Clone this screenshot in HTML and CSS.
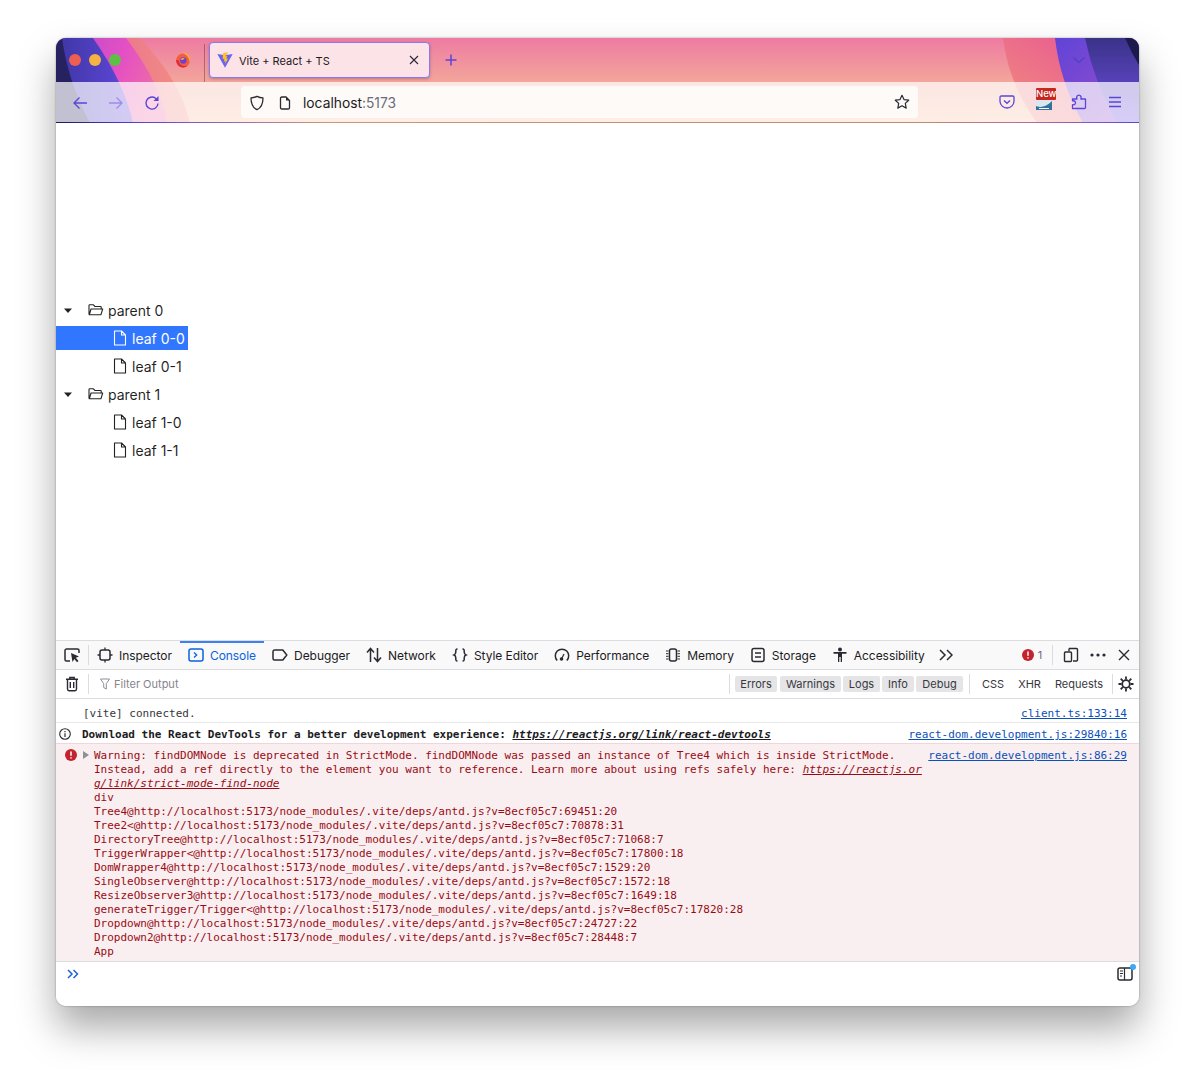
FILE: index.html
```html
<!DOCTYPE html>
<html lang="en">
<head>
<meta charset="utf-8">
<title>Vite + React + TS</title>
<link rel="stylesheet" href="styles.css">
</head>
<body>
<div class="window">
  <header class="chrome">
    <svg class="art" viewBox="0 0 1083 85" preserveAspectRatio="none" aria-hidden="true">
      <defs>
        <linearGradient id="base" x1="0" y1="0" x2="0" y2="1"><stop offset="0" stop-color="#ee7ba2"/><stop offset=".55" stop-color="#f3a89a"/><stop offset="1" stop-color="#f8c0a0"/></linearGradient>
        <linearGradient id="magL" x1="0" y1="0" x2="1" y2=".3"><stop offset="0" stop-color="#b04ccc"/><stop offset=".6" stop-color="#e44fc4"/><stop offset="1" stop-color="#ee6ca8"/></linearGradient>
        <linearGradient id="salL" x1="0" y1="0" x2="1" y2="0"><stop offset="0" stop-color="#e8609c"/><stop offset="1" stop-color="#f29080"/></linearGradient>
        <linearGradient id="magR" x1="0" y1="1" x2="1" y2="0"><stop offset="0" stop-color="#f2907c"/><stop offset="1" stop-color="#e64e96"/></linearGradient>
        <linearGradient id="purL" x1="0" y1="0" x2="1" y2="0"><stop offset="0" stop-color="#3d36a4"/><stop offset="1" stop-color="#6248dc"/></linearGradient>
        <linearGradient id="purR" x1="0" y1="0" x2="1" y2="1"><stop offset="0" stop-color="#5f44d8"/><stop offset="1" stop-color="#a04ec8"/></linearGradient>
        <linearGradient id="purD" x1="0" y1="0" x2="0" y2="1"><stop offset="0" stop-color="#3a3288"/><stop offset="1" stop-color="#7150e6"/></linearGradient>
      </defs>
      <rect width="1083" height="85" fill="url(#base)"/>
      <path d="M0 0H84Q124 42 134 85H0Z" fill="url(#salL)"/>
      <path d="M0 0H70Q104 44 111 85H0Z" fill="url(#magL)"/>
      <path d="M0 0H37Q68 44 77 85H0Z" fill="url(#purL)"/>
      <path d="M0 0H6Q12 44 34 85H0Z" fill="#26225f"/>
      <path d="M947 0H1083V85H981Q952 44 947 0Z" fill="url(#magR)"/>
      <path d="M999 0H1083V85H1027Q1004 44 999 0Z" fill="url(#purR)"/>
      <path d="M1029 0H1083V85H1061Q1038 44 1029 0Z" fill="url(#purD)"/>
      <path d="M1069 0H1083V27Q1075 14 1069 0Z" fill="#1c1a4c"/>
    </svg>
    <div class="tabbar">
      <div class="lights">
        <span class="light red"></span><span class="light yellow"></span><span class="light green"></span>
      </div>
      <svg class="fx" width="16" height="16" viewBox="0 0 16 16" aria-hidden="true">
        <circle cx="8" cy="8.600" r="7" fill="#f0603a"/>
        <path d="M8 .800c4 0 7.300 3.200 7.300 7.400 0 1-.2 1.800-.5 2.400C14.400 6 12 2.600 8 .800Z" fill="#ffb53c"/>
        <path d="M1 8c.3 4 3.400 7.500 7 7.500 2 0 3.600-.8 4.800-2-2.300 1-6.300.9-8-2C3.700 9.800 4 9 4.500 8.500 3 8.500 1.800 8.200 1 8Z" fill="#e3273f"/>
        <circle cx="8.300" cy="8.500" r="3.200" fill="#6e3fd0"/>
        <path d="M5.500 7.500c1-1.500 3-2 5-1-1-.3-2 .2-2 1-.9.400-2 .4-3 0Z" fill="#ffb53c"/>
      </svg>
      <span class="tab-sep"></span>
      <div class="tab">
        <svg width="16" height="16" viewBox="0 0 16 16" aria-hidden="true">
          <path d="M.3 1.900 8 15.700 15.700 1.900 8 3.300Z" fill="#6d63f0"/>
          <path d="M11.300 .3 6 1.300l-.3 5.800 1.700-.3-.4 2.600 1.400-.4-.3 2.800 3-5.400-1.700.3.6-2.700-1.500.3Z" fill="#ffc31f"/>
        </svg>
        <span class="tab-title">Vite + React + TS</span>
        <svg class="tab-x" width="10" height="10" viewBox="0 0 10 10" aria-hidden="true"><path d="M1 1l8 8M9 1 1 9" stroke="#2b2a33" stroke-width="1.100" fill="none"/></svg>
      </div>
      <svg class="plus" width="14" height="14" viewBox="0 0 14 14" aria-hidden="true"><path d="M7 1.500v11M1.500 7h11" stroke="#5b45d6" stroke-width="1.500" fill="none"/></svg>
      <svg class="allTabs" width="14" height="8" viewBox="0 0 14 8" aria-hidden="true"><path d="M1.500 1.500 7 6.500l5.500-5" stroke="#4e3fc4" stroke-width="1.200" fill="none"/></svg>
    </div>
    <nav class="navbar">
      <svg class="nav-ic back" width="16" height="14" viewBox="0 0 16 14" aria-hidden="true"><path d="M15 7H2M7.500 1.500 2 7l5.500 5.500" stroke="#5b45d6" stroke-width="1.300" fill="none"/></svg>
      <svg class="nav-ic fwd" width="16" height="14" viewBox="0 0 16 14" aria-hidden="true"><path d="M1 7h13M8.500 1.500 14 7l-5.500 5.500" stroke="#9c8ee6" stroke-width="1.300" fill="none"/></svg>
      <svg class="nav-ic reload" width="16" height="16" viewBox="0 0 16 16" aria-hidden="true"><path d="M14 8.500A6 6 0 1 1 11.500 3.200L14 5" stroke="#5b45d6" stroke-width="1.400" fill="none"/><path d="M14.500 1v5h-5Z" fill="#5b45d6"/></svg>
      <div class="urlbar">
        <svg class="shield" width="16" height="16" viewBox="0 0 16 16" aria-hidden="true"><path d="M8 1.300c2 1 4 1.500 6 1.600 0 5.500-1.600 9.700-6 11.800C3.600 12.600 2 8.400 2 2.900c2-.1 4-.6 6-1.600Z" stroke="#2b2a33" stroke-width="1.300" fill="none" stroke-linejoin="round"/></svg>
        <svg class="page-ic" width="14" height="14" viewBox="0 0 14 14" aria-hidden="true"><path d="M2.500 2.300c0-.7.500-1.300 1.300-1.300H8l3.500 3.500v7.200c0 .7-.6 1.300-1.300 1.300H3.800c-.8 0-1.300-.6-1.300-1.300Z" stroke="#2b2a33" stroke-width="1.300" fill="none"/><path d="M8 1v3.500h3.500Z" fill="#2b2a33"/></svg>
        <span class="url">localhost<span class="port">:5173</span></span>
        <svg class="star" width="16" height="16" viewBox="0 0 16 16" aria-hidden="true"><path d="m8 1.300 2 4.300 4.700.6-3.400 3.200.9 4.700L8 11.800l-4.200 2.300.9-4.700L1.300 6.200 6 5.600Z" stroke="#2b2a33" stroke-width="1.200" fill="none" stroke-linejoin="round"/></svg>
      </div>
      <svg class="pocket" width="16" height="14" viewBox="0 0 16 14" aria-hidden="true"><path d="M2.200 1h11.600c.7 0 1.200.5 1.200 1.200v4.300A7 7 0 0 1 8 13 7 7 0 0 1 1 6.500V2.200C1 1.500 1.500 1 2.200 1Z" stroke="#5b45d6" stroke-width="1.300" fill="none"/><path d="M5 5.500 8 8.300l3-2.800" stroke="#5b45d6" stroke-width="1.300" fill="none"/></svg>
      <div class="newext">
        <svg width="16" height="16" viewBox="0 0 16 16" aria-hidden="true"><rect x="0" y="4" width="16" height="12" fill="#dce6ef"/><path d="M0 12c5 2 10 1 16-5v9H0Z" fill="#33719f"/><path d="M3 14h10v1H3Z" fill="#fff"/></svg>
        <span class="badge">New</span>
      </div>
      <svg class="puzzle" width="16" height="16" viewBox="0 0 16 16" aria-hidden="true"><path d="M1.500 14.500V10.600c1.800.6 3-.4 3-1.800S3.300 6.300 1.500 6.900V5H6C5.100 3 6 1.200 7.900 1.200S10.700 3 9.800 5h4.700v8.500c0 .6-.4 1-1 1Z" stroke="#5b45d6" stroke-width="1.300" fill="none" stroke-linejoin="round"/></svg>
      <svg class="burger" width="14" height="12" viewBox="0 0 14 12" aria-hidden="true"><path d="M1 1.500h12M1 6h12M1 10.500h12" stroke="#5b45d6" stroke-width="1.300" fill="none"/></svg>
    </nav>
  </header>

  <main class="page">
    <ul class="tree">
      <li class="tree-row parent">
        <svg class="caret" width="8" height="5" viewBox="0 0 8 5" aria-hidden="true"><path d="M0 .5h8L4 5Z" fill="#222"/></svg>
        <svg class="folder" width="16" height="14" viewBox="0 0 16 14" aria-hidden="true"><path d="M1 11.500V2.500c0-.4.300-.7.700-.7h3.700l1.600 1.700h5.500c.4 0 .7.300.7.700V6M1.300 11.800 3 6h11.700l-1.800 5.800Z" stroke="#222" stroke-width="1.100" fill="none" stroke-linejoin="round"/></svg>
        <span class="label">parent 0</span>
      </li>
      <li class="tree-row leaf selected">
        <svg class="file" width="14" height="16" viewBox="0 0 14 16" aria-hidden="true"><path d="M1.500 1h7l4 4v10h-11ZM8.500 1v4h4" stroke="#fff" stroke-width="1.100" fill="none" stroke-linejoin="round"/></svg>
        <span class="label">leaf 0-0</span>
      </li>
      <li class="tree-row leaf">
        <svg class="file" width="14" height="16" viewBox="0 0 14 16" aria-hidden="true"><path d="M1.500 1h7l4 4v10h-11ZM8.500 1v4h4" stroke="#222" stroke-width="1.100" fill="none" stroke-linejoin="round"/></svg>
        <span class="label">leaf 0-1</span>
      </li>
      <li class="tree-row parent">
        <svg class="caret" width="8" height="5" viewBox="0 0 8 5" aria-hidden="true"><path d="M0 .5h8L4 5Z" fill="#222"/></svg>
        <svg class="folder" width="16" height="14" viewBox="0 0 16 14" aria-hidden="true"><path d="M1 11.500V2.500c0-.4.300-.7.700-.7h3.700l1.600 1.700h5.500c.4 0 .7.300.7.700V6M1.300 11.800 3 6h11.700l-1.800 5.800Z" stroke="#222" stroke-width="1.100" fill="none" stroke-linejoin="round"/></svg>
        <span class="label">parent 1</span>
      </li>
      <li class="tree-row leaf">
        <svg class="file" width="14" height="16" viewBox="0 0 14 16" aria-hidden="true"><path d="M1.500 1h7l4 4v10h-11ZM8.500 1v4h4" stroke="#222" stroke-width="1.100" fill="none" stroke-linejoin="round"/></svg>
        <span class="label">leaf 1-0</span>
      </li>
      <li class="tree-row leaf">
        <svg class="file" width="14" height="16" viewBox="0 0 14 16" aria-hidden="true"><path d="M1.500 1h7l4 4v10h-11ZM8.500 1v4h4" stroke="#222" stroke-width="1.100" fill="none" stroke-linejoin="round"/></svg>
        <span class="label">leaf 1-1</span>
      </li>
    </ul>
  </main>

  <section class="devtools">
    <div class="dt-tabs">
      <svg class="picker" width="16" height="16" viewBox="0 0 16 16" aria-hidden="true"><path d="M6 14H2.500C1.700 14 1 13.300 1 12.500v-9C1 2.700 1.700 2 2.500 2h11c.8 0 1.500.7 1.500 1.500V6" stroke="#2b2a33" stroke-width="1.500" fill="none"/><path d="m7 6 8 3.500-3.200 1.200L14.500 14l-1.500 1.300-2.600-3.300L8.500 15Z" fill="#2b2a33"/></svg>
      <span class="dt-sep"></span>
      <div class="dt-tab">
        <svg width="16" height="16" viewBox="0 0 16 16" aria-hidden="true"><rect x="3" y="3" width="10" height="10" rx="2" stroke="#2b2a33" stroke-width="1.500" fill="none"/><path d="M8 .5V3M8 13v2.500M.5 8H3M13 8h2.500" stroke="#2b2a33" stroke-width="1.300" fill="none"/></svg>
        <span>Inspector</span>
      </div>
      <div class="dt-tab active">
        <svg width="16" height="16" viewBox="0 0 16 16" aria-hidden="true"><rect x="1" y="2" width="14" height="12" rx="2" stroke="#0b63dd" stroke-width="1.500" fill="none"/><path d="m6 5.500 2.700 2.500L6 10.500" stroke="#0b63dd" stroke-width="1.300" fill="none"/></svg>
        <span>Console</span>
      </div>
      <div class="dt-tab">
        <svg width="16" height="16" viewBox="0 0 16 16" aria-hidden="true"><path d="M2.500 3h8.300l4 5-4 5H2.500C1.700 13 1 12.300 1 11.500v-7C1 3.700 1.700 3 2.500 3Z" stroke="#2b2a33" stroke-width="1.500" fill="none" stroke-linejoin="round"/></svg>
        <span>Debugger</span>
      </div>
      <div class="dt-tab">
        <svg width="16" height="16" viewBox="0 0 16 16" aria-hidden="true"><path d="M4.500 15V2M1 5.500l3.500-4 3.500 4M11.500 1v13M8 10.500l3.500 4 3.500-4" stroke="#2b2a33" stroke-width="1.500" fill="none"/></svg>
        <span>Network</span>
      </div>
      <div class="dt-tab">
        <svg width="16" height="16" viewBox="0 0 16 16" aria-hidden="true"><path d="M5.500 2C3.500 2 3.800 3.500 3.800 5S3.500 7.500 2 8c1.500.5 1.800 1.500 1.800 3s-.3 3 1.700 3M10.500 2c2 0 1.700 1.500 1.700 3s.3 2.500 1.800 3c-1.500.5-1.800 1.500-1.800 3s.3 3-1.700 3" stroke="#2b2a33" stroke-width="1.500" fill="none"/></svg>
        <span>Style Editor</span>
      </div>
      <div class="dt-tab">
        <svg width="16" height="16" viewBox="0 0 16 16" aria-hidden="true"><path d="M3.200 13.500A6.700 6.700 0 1 1 12.800 13.500" stroke="#2b2a33" stroke-width="1.500" fill="none"/><circle cx="7.500" cy="12" r="1.800" fill="#2b2a33"/><path d="m7.500 12 2.500-5" stroke="#2b2a33" stroke-width="1.300"/></svg>
        <span>Performance</span>
      </div>
      <div class="dt-tab">
        <svg width="16" height="16" viewBox="0 0 16 16" aria-hidden="true"><rect x="4.500" y="2" width="7" height="12" rx="2" stroke="#2b2a33" stroke-width="1.500" fill="none"/><path d="M1 4h2.500M1 6.700h2.500M1 9.300h2.500M1 12h2.500M12.500 4H15M12.500 6.700H15M12.500 9.300H15M12.500 12H15" stroke="#2b2a33" stroke-width="1"/></svg>
        <span>Memory</span>
      </div>
      <div class="dt-tab">
        <svg width="16" height="16" viewBox="0 0 16 16" aria-hidden="true"><rect x="2" y="1.500" width="12" height="13" rx="2" stroke="#2b2a33" stroke-width="1.500" fill="none"/><path d="M5 6h6M5 10h6" stroke="#2b2a33" stroke-width="1.400"/></svg>
        <span>Storage</span>
      </div>
      <div class="dt-tab">
        <svg width="16" height="16" viewBox="0 0 16 16" aria-hidden="true"><circle cx="8" cy="2.500" r="2" fill="#2b2a33"/><path d="M1.500 5h13v1.700H10V15H8.700v-5H7.300v5H6V6.700H1.500Z" fill="#2b2a33"/></svg>
        <span>Accessibility</span>
      </div>
      <svg class="more-tabs" width="14" height="12" viewBox="0 0 14 12" aria-hidden="true"><path d="m1 1 5 5-5 5M8 1l5 5-5 5" stroke="#2b2a33" stroke-width="1.500" fill="none"/></svg>
      <svg class="err-ic" width="12" height="12" viewBox="0 0 12 12" aria-hidden="true"><circle cx="6" cy="6" r="6" fill="#c4222c"/><path d="M6 2.500v4.200M6 8.200v1.300" stroke="#fff" stroke-width="1.500"/></svg>
      <span class="err-count">1</span>
      <span class="dt-sep right-sep"></span>
      <svg class="resp" width="16" height="16" viewBox="0 0 16 16" aria-hidden="true"><path d="M6 1.500h7.500c.6 0 1 .4 1 1V13c0 .6-.4 1-1 1H10M6 4V1.500" stroke="#2b2a33" stroke-width="1.400" fill="none"/><rect x="1.500" y="5" width="7" height="9.500" rx="1" stroke="#2b2a33" stroke-width="1.400" fill="none"/></svg>
      <svg class="dots" width="16" height="4" viewBox="0 0 16 4" aria-hidden="true"><circle cx="2" cy="2" r="1.600" fill="#2b2a33"/><circle cx="8" cy="2" r="1.600" fill="#2b2a33"/><circle cx="14" cy="2" r="1.600" fill="#2b2a33"/></svg>
      <svg class="dt-close" width="12" height="12" viewBox="0 0 12 12" aria-hidden="true"><path d="m1 1 10 10M11 1 1 11" stroke="#2b2a33" stroke-width="1.400"/></svg>
    </div>

    <div class="dt-filter">
      <svg class="trash" width="14" height="16" viewBox="0 0 14 16" aria-hidden="true"><path d="M1 3.200h12M4.800 3V1.500h4.400V3M2.500 3.500V13c0 1 .6 1.700 1.500 1.700h6c.9 0 1.500-.7 1.500-1.700V3.500M5.300 6v6M8.700 6v6" stroke="#2b2a33" stroke-width="1.400" fill="none"/></svg>
      <span class="dt-sep trash-sep"></span>
      <svg class="funnel" width="10" height="12" viewBox="0 0 10 12" aria-hidden="true"><path d="M.5 1h9L6.300 5.700v5.300L3.700 9.500V5.700Z" stroke="#8f8f96" stroke-width="1" fill="none" stroke-linejoin="round"/></svg>
      <span class="filter-text">Filter Output</span>
      <span class="dt-sep btn-sep"></span>
      <span class="chip c-errors">Errors</span>
      <span class="chip c-warnings">Warnings</span>
      <span class="chip c-logs">Logs</span>
      <span class="chip c-info">Info</span>
      <span class="chip c-debug">Debug</span>
      <span class="dt-sep css-sep"></span>
      <span class="plain p-css">CSS</span>
      <span class="plain p-xhr">XHR</span>
      <span class="plain p-req">Requests</span>
      <span class="dt-sep gear-sep"></span>
      <svg class="gear" width="16" height="16" viewBox="0 0 16 16" aria-hidden="true"><circle cx="8" cy="8" r="3.800" stroke="#2b2a33" stroke-width="1.800" fill="none"/><path d="M8 .5v3M8 12.500v3M.5 8h3M12.500 8h3M2.700 2.700l2.100 2.100M11.200 11.200l2.100 2.100M13.300 2.700l-2.100 2.100M4.800 11.200l-2.100 2.100" stroke="#2b2a33" stroke-width="1.800"/></svg>
    </div>

    <div class="log">
      <div class="msg plain-msg">
        <span class="msg-text">[vite] connected.</span>
        <a class="src">client.ts:133:14</a>
      </div>
      <div class="msg info-msg">
        <svg class="info-ic" width="12" height="12" viewBox="0 0 12 12" aria-hidden="true"><circle cx="6" cy="6" r="5.300" stroke="#2b2a33" stroke-width="1.100" fill="none"/><path d="M6 5.200v3.800M6 3v1.200" stroke="#2b2a33" stroke-width="1.200"/></svg>
        <span class="msg-text strong">Download the React DevTools for a better development experience: <em class="ext">https://reactjs.org/link/react-devtools</em></span>
        <a class="src">react-dom.development.js:29840:16</a>
      </div>
      <div class="msg err-msg">
        <svg class="err-big" width="12" height="12" viewBox="0 0 12 12" aria-hidden="true"><circle cx="6" cy="6" r="6" fill="#c4222c"/><path d="M6 2.500v4.200M6 8.200v1.300" stroke="#fff" stroke-width="1.500"/></svg>
        <svg class="twisty" width="6" height="8" viewBox="0 0 6 8" aria-hidden="true"><path d="M0 0l6 4-6 4Z" fill="#8f8f96"/></svg>
        <div class="err-body">
          <div class="err-top">
            <div class="err-head">
              <div>Warning: findDOMNode is deprecated in StrictMode. findDOMNode was passed an instance of Tree4 which is inside StrictMode.</div>
              <div>Instead, add a ref directly to the element you want to reference. Learn more about using refs safely here: <em class="ext">https://reactjs.or</em></div>
              <div><em class="ext">g/link/strict-mode-find-node</em></div>
            </div>
            <a class="src err-src">react-dom.development.js:86:29</a>
          </div>
          <div>div</div>
          <div>Tree4@http://localhost:5173/node_modules/.vite/deps/antd.js?v=8ecf05c7:69451:20</div>
          <div>Tree2&lt;@http://localhost:5173/node_modules/.vite/deps/antd.js?v=8ecf05c7:70878:31</div>
          <div>DirectoryTree@http://localhost:5173/node_modules/.vite/deps/antd.js?v=8ecf05c7:71068:7</div>
          <div>TriggerWrapper&lt;@http://localhost:5173/node_modules/.vite/deps/antd.js?v=8ecf05c7:17800:18</div>
          <div>DomWrapper4@http://localhost:5173/node_modules/.vite/deps/antd.js?v=8ecf05c7:1529:20</div>
          <div>SingleObserver@http://localhost:5173/node_modules/.vite/deps/antd.js?v=8ecf05c7:1572:18</div>
          <div>ResizeObserver3@http://localhost:5173/node_modules/.vite/deps/antd.js?v=8ecf05c7:1649:18</div>
          <div>generateTrigger/Trigger&lt;@http://localhost:5173/node_modules/.vite/deps/antd.js?v=8ecf05c7:17820:28</div>
          <div>Dropdown@http://localhost:5173/node_modules/.vite/deps/antd.js?v=8ecf05c7:24727:22</div>
          <div>Dropdown2@http://localhost:5173/node_modules/.vite/deps/antd.js?v=8ecf05c7:28448:7</div>
          <div>App</div>
        </div>
      </div>
    </div>

    <div class="prompt">
      <svg class="prompt-ic" width="12" height="10" viewBox="0 0 12 10" aria-hidden="true"><path d="m1 1 4 4-4 4M6.500 1l4 4-4 4" stroke="#1b62d8" stroke-width="1.500" fill="none"/></svg>
      <div class="editor-ic">
        <svg width="16" height="14" viewBox="0 0 16 14" aria-hidden="true"><rect x="1" y="1" width="14" height="12" rx="2" stroke="#2b2a33" stroke-width="1.500" fill="none"/><path d="M7.500 1v12" stroke="#2b2a33" stroke-width="1.200"/><path d="M3 4h3M3 6.500h3M3 9h2" stroke="#2b2a33" stroke-width="1"/></svg>
        <span class="dot"></span>
      </div>
    </div>
  </section>
</div>
</body>
</html>
```
FILE: styles.css
```css
* { box-sizing: border-box; }
html, body { margin: 0; padding: 0; background: #fff; }
body {
  width: 1195px;
  height: 1080px;
  padding: 38px 56px 74px;
  overflow: hidden;
  font-family: Inter, "Noto Sans", sans-serif;
  color: #1c1b22;
}
.window {
  width: 1083px;
  height: 968px;
  display: flex;
  flex-direction: column;
  background: #fff;
  border-radius: 10px;
  overflow: hidden;
  box-shadow: 0 22px 38px rgba(0,0,0,.34), 0 0 2px rgba(0,0,0,.4);
}

/* browser chrome */
.chrome { position: relative; height: 85px; flex: none; }
.art { position: absolute; inset: 0; width: 100%; height: 100%; display: block; }
.tabbar, .navbar { position: relative; display: flex; align-items: center; }
.tabbar { height: 44px; }
.lights { display: flex; gap: 8px; margin-left: 13px; }
.light { width: 12px; height: 12px; border-radius: 50%; }
.red { background: #ee5f51; }
.yellow { background: #f5b33f; }
.green { background: #5cc045; }
.fx { margin-left: 54px; margin-top: -1px; }
.tab-sep { width: 1px; height: 38px; background: rgba(70,50,70,.45); margin-left: 13px; margin-top: 6px; }
.tab {
  display: flex;
  align-items: center;
  width: 221px;
  height: 36px;
  margin-left: 4px;
  padding: 0 10px 0 7px;
  background: #fbe3e8;
  border: 1px solid #8a78f2;
  border-radius: 4px;
  box-shadow: 0 1px 3px rgba(60,30,60,.3);
}
.tab-title { margin-left: 6px; padding-top: 1px; font-size: 11px; color: #1c1b22; flex: 1; }
.plus { margin-left: 14px; }
.allTabs { margin-left: 614px; }
.navbar { height: 41px; background: rgba(255,255,255,.72); border-bottom: 1px solid; border-image: linear-gradient(90deg, #1b1850 0, #4b3bc4 6%, #7b56c8 12%, #c89878 25%, #c08a70 80%, #b86a9a 90%, #5a46d6 100%) 1; }
.nav-ic { flex: none; margin-top: 2px; }
.back { margin-left: 16px; }
.fwd { margin-left: 20px; }
.reload { margin-left: 20px; }
.urlbar {
  display: flex;
  align-items: center;
  width: 677px;
  height: 32px;
  margin-left: 81px;
  padding: 0 8px;
  background: #fdfaf8;
  border-radius: 4px;
}
.shield, .page-ic { margin-top: 2px; }
.page-ic { margin-left: 13px; }
.url { margin-left: 11px; padding-top: 2px; font-size: 13.800px; color: #1c1b22; flex: 1; }
.port { color: #6b6a76; }
.pocket { margin-left: 81px; }
.newext { position: relative; width: 16px; height: 16px; margin-left: 21px; }
.newext svg { display: block; }
.badge { position: absolute; left: 0; top: -6px; width: 20px; height: 12px; background: #c6281f; border-radius: 1px; color: #fff; font-size: 9.500px; font-weight: 500; line-height: 12px; text-align: center; }
.puzzle { margin-left: 19px; }
.burger { margin-left: 21px; }

/* page */
.page { flex: 1; min-height: 0; padding-top: 175px; background: #fff; }
.tree { list-style: none; margin: 0; padding: 0; }
.tree-row { display: flex; align-items: center; height: 24px; margin-bottom: 4px; font-size: 14px; color: rgba(0,0,0,.88); }
.caret { margin-left: 8px; }
.folder { margin-left: 16px; margin-right: 4px; }
.leaf { width: 132px; padding-left: 57px; }
.leaf .label { margin-left: 5px; }
.selected { background: #3176ff; color: #fff; }

/* devtools */
.devtools { flex: none; height: 366px; display: flex; flex-direction: column; border-top: 1px solid #dcdce0; }
.dt-tabs { display: flex; align-items: center; height: 29px; background: #f9f9fa; border-bottom: 1px solid #dcdce0; font-size: 12px; letter-spacing: -.05px; color: #1c1b22; flex: none; }
.picker { margin-left: 8px; }
.dt-sep { width: 1px; height: 20px; background: #dcdce0; flex: none; }
.dt-tabs > .dt-sep:nth-child(2) { margin-left: 8px; }
.dt-tab { display: flex; align-items: center; gap: 6px; height: 28px; padding: 0 8px; white-space: nowrap; }
.dt-tab.active { color: #0b63dd; box-shadow: inset 0 2px 0 #3b82f0; }
.more-tabs { margin-left: 6px; }
.err-ic { margin-left: 69px; }
.err-count { margin-left: 4px; color: #6b6a76; font-size: 11px; }
.right-sep { margin-left: 10px; }
.resp { margin-left: 10px; }
.dots { margin-left: 11px; }
.dt-close { margin-left: 12px; }

.dt-filter { display: flex; align-items: center; height: 29px; background: #fff; border-bottom: 1px solid #dcdce0; font-size: 11px; color: #38383d; flex: none; }
.trash { margin-left: 9px; }
.trash-sep { margin-left: 9px; }
.funnel { margin-left: 11px; }
.filter-text { margin-left: 4px; color: #85858c; width: 615px; }
.chip { display: block; height: 16px; line-height: 16px; background: #e5e5e7; border-radius: 2px; text-align: center; }
.c-errors { margin-left: 5px; width: 42px; }
.c-warnings { margin-left: 3px; width: 61px; }
.c-logs { margin-left: 2px; width: 37px; }
.c-info { margin-left: 2px; width: 32px; }
.c-debug { margin-left: 2px; width: 47px; }
.css-sep { margin-left: 6px; }
.p-css { margin-left: 12px; }
.p-xhr { margin-left: 14px; }
.p-req { margin-left: 14px; }
.gear-sep { margin-left: 9px; }
.gear { margin-left: 5px; }

.log { flex: none; height: 262px; padding-top: 3px; font-family: "DejaVu Sans Mono", "Liberation Mono", monospace; font-size: 11px; line-height: 14px; }
.msg { display: flex; align-items: flex-start; white-space: nowrap; }
.plain-msg { height: 21px; padding: 5px 12px 0 27px; border-bottom: 1px solid #e8e8ea; color: #38383d; }
.info-msg { height: 21px; padding: 5px 12px 0 3px; border-bottom: 1px solid #f3d4d8; color: #1c1b22; }
.info-ic { margin-top: 0; flex: none; }
.info-msg .msg-text { margin-left: 11px; }
.msg-text { flex: 1; min-width: 0; }
.strong { font-weight: 700; }
.ext { text-decoration: underline; font-style: italic; }
.src { color: #0b50b8; text-decoration: underline; }
.err-msg { background: #f9eff1; color: #990b14; height: 217px; padding: 5px 12px 0 9px; }
.err-big { margin-top: 0; flex: none; }
.twisty { margin-left: 6px; margin-top: 2px; flex: none; }
.err-body { margin-left: 5px; flex: 1; min-width: 0; }
.err-top { display: flex; justify-content: space-between; }
.err-src { color: #0b50b8; }

.prompt { flex: 1; display: flex; justify-content: space-between; align-items: flex-start; padding: 5px 6px 0 11px; border-top: 1px solid #dcdce0; background: #fff; }
.prompt-ic { margin-top: 2px; }
.editor-ic { position: relative; width: 16px; height: 14px; }
.editor-ic svg { display: block; }
.dot { position: absolute; right: -3px; top: -3px; width: 6px; height: 6px; border-radius: 50%; background: #3fa7f5; }
```
